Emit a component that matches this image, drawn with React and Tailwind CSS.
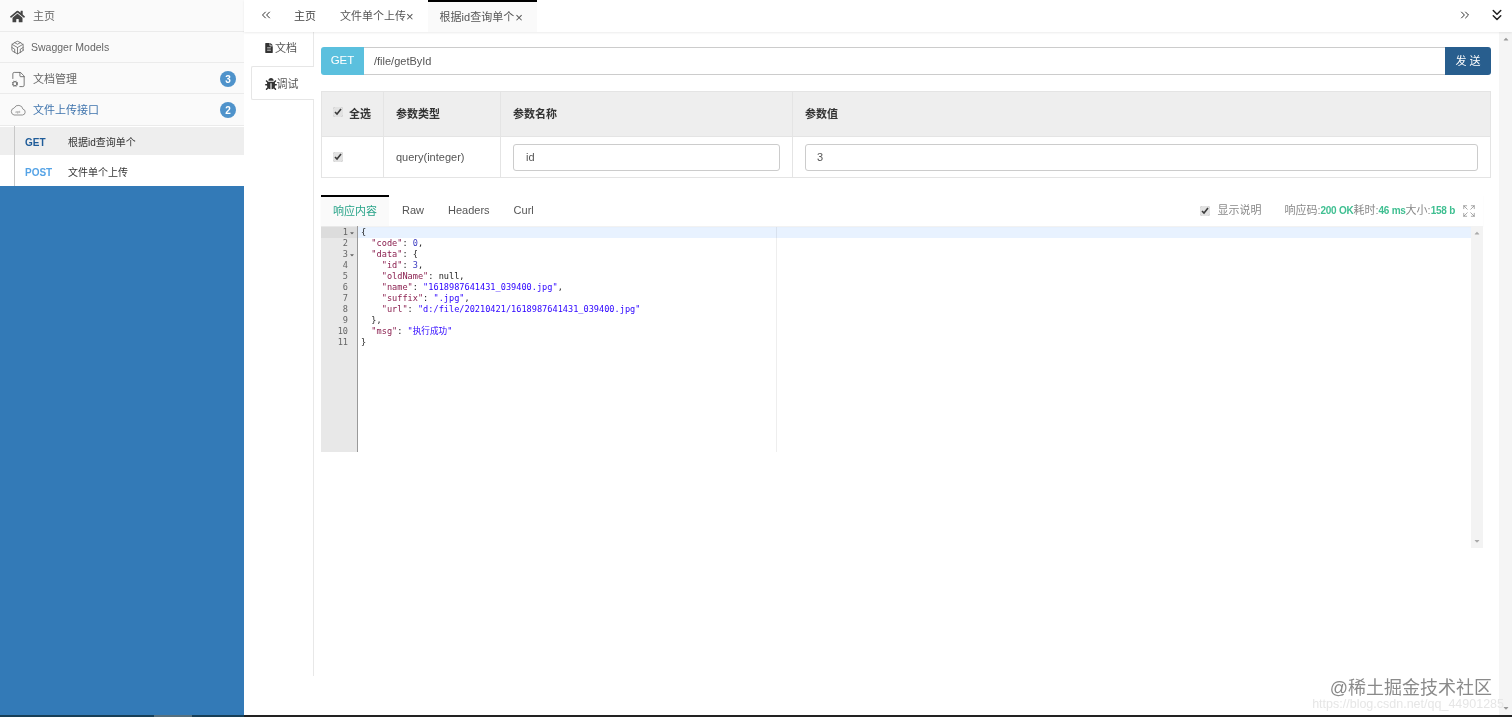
import React from 'react';
import { ChevronsLeft, ChevronsRight, ChevronsDown, Expand, FileCog, Codesandbox } from 'lucide-react';
import { FaHome, FaFileAlt, FaBug, FaCaretDown, FaCaretUp } from 'react-icons/fa';

const FONT = { fontFamily: '"Liberation Sans", "Noto Sans CJK SC", sans-serif' };

const K = ({ children }) => <span className="text-[#8a1f4f]">{children}</span>;
const S = ({ children }) => <span className="text-[#2a00ff]">{children}</span>;
const N = ({ children }) => <span className="text-[#3a3ac0]">{children}</span>;

// json response lines
const codeLines = [
  <>{'{'}</>,
  <>{'  '}<K>"code"</K>: <N>0</N>,</>,
  <>{'  '}<K>"data"</K>: {'{'}</>,
  <>{'    '}<K>"id"</K>: <N>3</N>,</>,
  <>{'    '}<K>"oldName"</K>: null,</>,
  <>{'    '}<K>"name"</K>: <S>"1618987641431_039400.jpg"</S>,</>,
  <>{'    '}<K>"suffix"</K>: <S>".jpg"</S>,</>,
  <>{'    '}<K>"url"</K>: <S>"d:/file/20210421/1618987641431_039400.jpg"</S></>,
  <>{'  '}{'}'},</>,
  <>{'  '}<K>"msg"</K>: <S>"执行成功"</S></>,
  <>{'}'}</>,
];

const ApiCloud = () => (
  <svg width="16" height="12" viewBox="0 0 16 12" fill="none" stroke="#777" strokeWidth="0.8">
    <path d="M4 11h8.5a3 3 0 0 0 .4-5.9A4.6 4.6 0 0 0 4.2 4 3.6 3.6 0 0 0 4 11z" />
    <text x="8" y="9" textAnchor="middle" fontSize="3.6" fill="#777" stroke="none">api</text>
  </svg>
);

const SideRow = ({ icon, label, badge, blue, h = 'h-[31px] pt-[1px]' }) => (
  <div className={`${h} flex items-center border-b border-[#ebebeb] bg-[#fafafa] pl-[10px] pr-[8px] text-[11px] ${blue ? 'text-[#3f74ad]' : 'text-[#666]'}`}>
    <span className="w-[23px] flex items-center">{icon}</span>
    <span className="flex-1">{label}</span>
    {badge && (
      <span className="w-[16px] h-[16px] rounded-full bg-[#4f93cb] text-white text-[10px] font-bold flex items-center justify-center">{badge}</span>
    )}
  </div>
);

const SubRow = ({ method, label, color, active }) => (
  <div className={`h-[28px] flex items-center pl-[25px] text-[10px] text-[#333] ${active ? 'bg-[#eeeeee] pt-[3px]' : 'bg-white'}`}>
    <span className={`w-[43px] font-bold ${color}`}>{method}</span>
    <span>{label}</span>
  </div>
);

const Check = () => (
  <input type="checkbox" defaultChecked className="w-[10px] h-[10px] accent-[#e2e2e2]" />
);

const Th = ({ className, children }) => (
  <th className={`border border-[#e4e4e4] bg-[#eeeeee] px-[12px] text-left text-[11px] font-bold text-[#333] ${className}`}>{children}</th>
);

const App = () => {
  return (
    <div className="w-[1512px] h-[717px] flex flex-col overflow-hidden bg-white relative" style={FONT}>
      <div className="flex flex-1 min-h-0">
        {/* Sidebar */}
        <aside className="w-[244px] flex flex-col bg-[#337ab7]">
          <SideRow h="h-[32px] pt-[1px]" icon={<FaHome size={15} className="text-[#444]" />} label="主页" />
          <div className="h-[31px] flex items-center border-b border-[#ebebeb] bg-[#fafafa] pt-[1px] pl-[10px] text-[10.5px] text-[#666]">
            <span className="w-[21px]"><Codesandbox size={15} strokeWidth={1.3} className="text-[#666]" /></span>
            Swagger Models
          </div>
          <SideRow h="h-[31px] pt-[2px]" icon={<FileCog size={17} strokeWidth={1.1} className="text-[#555]" />} label="文档管理" badge="3" />
          <SideRow h="h-[32px] pt-[1px]" blue icon={<ApiCloud />} label="文件上传接口" badge="2" />
          <div className="relative bg-white pt-[1px]">
            <SubRow active method="GET" label="根据id查询单个" color="text-[#1f5c99]" />
            <div className="h-[3px] bg-white" />
            <SubRow method="POST" label="文件单个上传" color="text-[#55a3e6]" />
            <div className="absolute left-[14px] top-0 bottom-0 w-px bg-[#c8c8c8]" />
          </div>
        </aside>

        {/* Main */}
        <main className="flex-1 min-w-0 flex flex-col">
          {/* Tab bar */}
          <div className="h-[32px] flex items-stretch text-[11px] text-[#555] shadow-[0_1px_2px_rgba(0,0,0,0.08)] z-10 bg-white">
            <div className="w-[44px] flex items-center justify-center pb-[3px]">
              <ChevronsLeft size={14} strokeWidth={1.6} className="text-[#222]" />
            </div>
            <div className="flex items-center pl-[6px] pr-[24px] text-[#444]">主页</div>
            <div className="flex items-center pr-[14px]">文件单个上传<span className="text-[13px] leading-none">×</span></div>
            <div className="flex items-center pl-[12px] w-[109px] border-t-2 border-black bg-[#fafafa]">根据id查询单个<span className="text-[13px] leading-none pl-[1px]">×</span></div>
            <div className="flex-1" />
            <div className="w-[32px] flex items-center justify-center pb-[3px] pr-[2px]">
              <ChevronsRight size={14} strokeWidth={1.6} className="text-[#222]" />
            </div>
            <div className="w-[30px] flex items-center justify-center pb-[3px]">
              <ChevronsDown size={18} strokeWidth={2} className="text-[#222]" />
            </div>
          </div>

          <div className="flex-1 min-h-0 flex">
            {/* Left doc tabs */}
            <div className="w-[70px] h-[644px] flex flex-col pl-[7px] border-r border-[#e8e8e8] text-[11px] text-[#555]">
              <div className="h-[34px] flex items-center justify-center gap-[1px] pr-[3px] pb-[2px]">
                <FaFileAlt size={10} className="text-[#333]" />文档
              </div>
              <div className="h-[34px] mr-[-1px] flex items-center justify-center border border-r-0 border-[#e6e6e6] rounded-l-[2px] bg-white pr-[3px] pt-[2px]">
                <FaBug size={12} className="text-[#333]" />调试
              </div>
            </div>

            {/* Debug panel */}
            <div className="flex-1 min-w-0 pl-[7px] pt-[15px] pr-[8px]">
              {/* Url bar */}
              <div className="w-[1170px] h-[28px] flex text-[11px]">
                <div className="w-[43px] bg-[#5bc0de] text-white text-[11.5px] flex items-center justify-center rounded-l-[3px]">GET</div>
                <input readOnly value="/file/getById" className="flex-1 border-y border-[#ccc] px-[10px] text-[#555] outline-none" style={FONT} />
                <button className="w-[46px] bg-[#285e8e] text-white rounded-r-[3px]">发 送</button>
              </div>

              {/* Params table */}
              <table className="w-[1170px] mt-[16px] border-collapse table-fixed">
                <thead>
                  <tr className="h-[45px]">
                    <Th className="w-[62px] !px-[11px]"><span className="flex items-center gap-[6px]"><span className="flex mb-[4px]"><Check /></span>全选</span></Th>
                    <Th className="w-[117px]">参数类型</Th>
                    <Th className="w-[292px]">参数名称</Th>
                    <Th>参数值</Th>
                  </tr>
                </thead>
                <tbody>
                  <tr className="h-[41px] text-[11px] text-[#555]">
                    <td className="border border-[#e4e4e4] px-[11px]"><span className="flex"><Check /></span></td>
                    <td className="border border-[#e4e4e4] px-[12px]">query(integer)</td>
                    <td className="border border-[#e4e4e4] px-[12px]">
                      <input readOnly value="id" className="w-full h-[27px] border border-[#ccc] rounded-[3px] px-[12px] outline-none" style={FONT} />
                    </td>
                    <td className="border border-[#e4e4e4] px-[12px]">
                      <input readOnly value="3" className="w-full h-[27px] border border-[#ccc] rounded-[3px] px-[11px] outline-none" style={FONT} />
                    </td>
                  </tr>
                </tbody>
              </table>

              {/* Response tabs */}
              <div className="w-[1162px] h-[31px] mt-[17px] flex items-stretch text-[11px] text-[#555] shadow-[0_1px_1px_rgba(0,0,0,0.05)]">
                <div className="w-[68px] flex items-center justify-center border-t-2 border-black bg-[#fafafa] text-[#27a388]">响应内容</div>
                <div className="flex items-center pl-[13px]">Raw</div>
                <div className="flex items-center pl-[24px]">Headers</div>
                <div className="flex items-center pl-[24px]">Curl</div>
                <div className="flex-1" />
                <div className="flex items-center gap-[7px] text-[#888]"><Check />显示说明</div>
                <div className="flex items-center ml-[23px] text-[#888]">
                  响应码:<b className="text-[10px] tracking-[-0.25px] text-[#3fbf91]">200 OK</b>耗时:<b className="text-[10px] tracking-[-0.25px] text-[#3fbf91]">46 ms</b>大小:<b className="text-[10px] tracking-[-0.25px] text-[#3fbf91]">158 b</b>
                </div>
                <div className="w-[28px] flex items-center justify-center">
                  <Expand size={14} strokeWidth={1.1} className="text-[#777]" />
                </div>
              </div>

              {/* Response editor */}
              <div className="w-[1162px] flex items-start">
                <div className="flex-1 h-[226px] flex">
                  <div className="w-[37px] bg-[#e8e8e8] border-r border-[#999] text-[8.6px] leading-[11px] text-[#666] pt-[1px]" style={{ fontFamily: '"DejaVu Sans Mono", monospace' }}>
                    {codeLines.map((_, i) => (
                      <div key={i} className={`h-[11px] flex items-center justify-end pr-[2px] ${i === 0 ? 'bg-[#dcdcdc]' : ''}`}>
                        {i + 1}
                        <span className="w-[7px] flex justify-center">{(i === 0 || i === 2) && <FaCaretDown size={6} />}</span>
                      </div>
                    ))}
                  </div>
                  <div className="flex-1 flex relative pt-[1px]">
                    <pre className="w-[419px] h-[225px] border-r border-[#eeeeee] pl-[3px] text-[8.6px] leading-[11px] text-[#222]" style={{ fontFamily: '"DejaVu Sans Mono", "Noto Sans CJK SC", monospace' }}>
                      {codeLines.map((line, i) => (
                        <div key={i} className="h-[11px]">{line}</div>
                      ))}
                    </pre>
                    <div className="absolute left-0 right-0 top-[1px] h-[11px] bg-[#e8f2ff] mix-blend-multiply" />
                  </div>
                </div>
                <div className="w-[12px] h-[322px] bg-[#f3f3f3] flex flex-col justify-between items-center py-[3px] text-[#aaa]">
                  <FaCaretUp size={8} />
                  <FaCaretDown size={8} />
                </div>
              </div>
            </div>

            {/* Page scrollbar */}
            <div className="w-[13px] bg-[#f5f5f5] flex flex-col justify-between items-center py-[3px] text-[#999]">
              <FaCaretUp size={8} />
              <FaCaretDown size={8} />
            </div>
          </div>
        </main>
      </div>

      {/* Bottom strip */}
      <div className="h-[2px] flex bg-[#222]">
        <div className="w-[154px] bg-[#173f57]" />
        <div className="w-[38px] bg-[#55707f]" />
        <div className="w-[52px] bg-[#173f57]" />
      </div>

      {/* Watermark */}
      <div className="absolute right-[20px] bottom-[19px] text-[18px] leading-[20px] text-[#8a8a8a]">@稀土掘金技术社区</div>
      <div className="absolute right-[8px] bottom-[6px] text-[12.5px] leading-[14px] text-[#e6e6e6]">https://blog.csdn.net/qq_44901285</div>
    </div>
  );
};

export default App;
